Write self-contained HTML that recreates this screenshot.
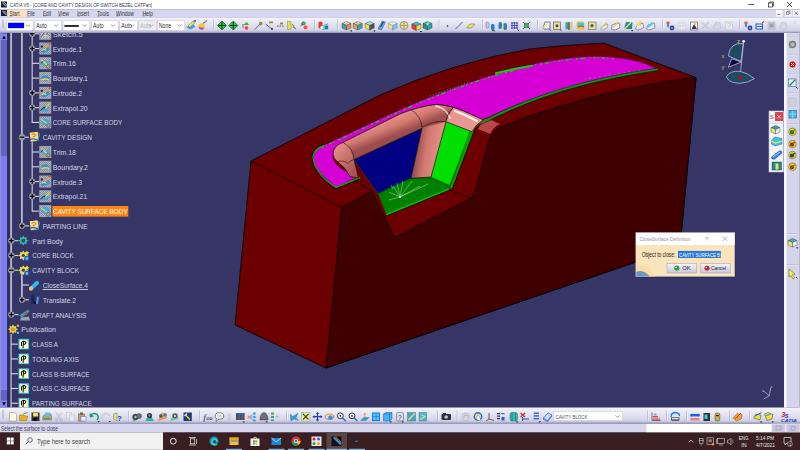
<!DOCTYPE html><html><head><meta charset="utf-8"><style>html,body{margin:0;padding:0;width:800px;height:450px;overflow:hidden;background:#353566}</style></head><body><svg width="800" height="450" viewBox="0 0 800 450" style="position:absolute;left:0;top:0" font-family="Liberation Sans"><defs><linearGradient id="tb" x1="0" y1="0" x2="0" y2="1"><stop offset="0" stop-color="#f4f4fc"/><stop offset="0.2" stop-color="#ececf8"/><stop offset="0.8" stop-color="#d4d4ea"/><stop offset="0.9" stop-color="#c0c0d8"/><stop offset="1" stop-color="#9090a8"/></linearGradient><linearGradient id="tube" x1="0" y1="0" x2="0" y2="1"><stop offset="0" stop-color="#f0a098"/><stop offset="0.5" stop-color="#e08880"/><stop offset="1" stop-color="#b06060"/></linearGradient><linearGradient id="btn" x1="0" y1="0" x2="0" y2="1"><stop offset="0" stop-color="#f4f4fc"/><stop offset="1" stop-color="#c8c8dc"/></linearGradient><radialGradient id="glb" cx="0.7" cy="0.3" r="0.8"><stop offset="0" stop-color="#ffd080"/><stop offset="0.5" stop-color="#f0c080"/><stop offset="1" stop-color="#6090b0"/></radialGradient><pattern id="chk" width="2" height="2" patternUnits="userSpaceOnUse"><rect width="2" height="2" fill="#b4b4bc"/><rect width="1" height="1" fill="#8c8c98"/><rect x="1" y="1" width="1" height="1" fill="#8c8c98"/></pattern><clipPath id="vpclip"><rect x="0" y="33" width="784" height="374.5"/></clipPath></defs><rect x="0" y="0" width="800" height="9.2" fill="#ffffff"/><rect x="1" y="1.5" width="6" height="6" fill="#1a1a2a"/><path d="M2,3 L6,7 L7,6 L3,2 Z" fill="#4aa0e0"/><path d="M4,2 L7,5" stroke="#f0a030" stroke-width="1"/><text x="10" y="7.0" font-size="6.0" fill="#383848" text-anchor="start" textLength="142" lengthAdjust="spacingAndGlyphs" >CATIA V5 - [CORE AND CAVITY DESIGN OF SWITCH BEZEL.CATPart]</text><path d="M748.5,4.5 H754" stroke="#000" stroke-width="0.7"/><rect x="768.5" y="3" width="4" height="4" fill="none" stroke="#000" stroke-width="0.6"/><path d="M769.5,3 V2 H773.5 V6 H772.5" fill="none" stroke="#000" stroke-width="0.6"/><path d="M787,2 L792,7 M792,2 L787,7" stroke="#000" stroke-width="0.7"/><rect x="0" y="9.2" width="800" height="8.3" fill="#d6d6ee"/><rect x="8.4" y="9.6" width="18" height="7.5" fill="#fde2c0"/><rect x="1" y="10" width="6" height="6" fill="#1a1a2a"/><path d="M2,11.5 L6,15.5 L7,14.5 L3,10.5 Z" fill="#4aa0e0"/><path d="M4,10.5 L7,13.5" stroke="#f0a030" stroke-width="1"/><text x="9.5" y="15.9" font-size="6.7" fill="#303040" text-anchor="start" textLength="10" lengthAdjust="spacingAndGlyphs" >Start</text><rect x="9.5" y="15.8" width="3" height="0.4" fill="#404050"/><text x="27.3" y="15.9" font-size="6.7" fill="#303040" text-anchor="start" textLength="7.6" lengthAdjust="spacingAndGlyphs" >File</text><rect x="27.3" y="15.8" width="3" height="0.4" fill="#404050"/><text x="43" y="15.9" font-size="6.7" fill="#303040" text-anchor="start" textLength="8" lengthAdjust="spacingAndGlyphs" >Edit</text><rect x="43" y="15.8" width="3" height="0.4" fill="#404050"/><text x="58" y="15.9" font-size="6.7" fill="#303040" text-anchor="start" textLength="11" lengthAdjust="spacingAndGlyphs" >View</text><rect x="58" y="15.8" width="3" height="0.4" fill="#404050"/><text x="77" y="15.9" font-size="6.7" fill="#303040" text-anchor="start" textLength="12" lengthAdjust="spacingAndGlyphs" >Insert</text><rect x="77" y="15.8" width="3" height="0.4" fill="#404050"/><text x="97" y="15.9" font-size="6.7" fill="#303040" text-anchor="start" textLength="12" lengthAdjust="spacingAndGlyphs" >Tools</text><rect x="97" y="15.8" width="3" height="0.4" fill="#404050"/><text x="116" y="15.9" font-size="6.7" fill="#303040" text-anchor="start" textLength="18" lengthAdjust="spacingAndGlyphs" >Window</text><rect x="116" y="15.8" width="3" height="0.4" fill="#404050"/><text x="142.4" y="15.9" font-size="6.7" fill="#303040" text-anchor="start" textLength="10.6" lengthAdjust="spacingAndGlyphs" >Help</text><rect x="142.4" y="15.8" width="3" height="0.4" fill="#404050"/><rect x="776" y="10" width="6.5" height="6.5" fill="#fafafe"/><rect x="785" y="10" width="6.5" height="6.5" fill="#fafafe"/><rect x="793" y="10" width="6.5" height="6.5" fill="#fafafe"/><path d="M777.5,14.5 H780" stroke="#303040" stroke-width="0.6"/><rect x="786.5" y="12" width="2.5" height="2.5" fill="none" stroke="#303040" stroke-width="0.5"/><path d="M787.5,12 V11 H790 V13.5 H789" fill="none" stroke="#303040" stroke-width="0.5"/><path d="M794.5,11.5 L798,15 M798,11.5 L794.5,15" stroke="#303040" stroke-width="0.6"/><rect x="0" y="17.3" width="800" height="15.7" fill="url(#tb)"/><rect x="2.5" y="19.5" width="1" height="9" fill="#a8a8c0"/><rect x="6.5" y="20.8" width="26.6" height="9.5" fill="#ffffff" stroke="#c4c4d8" stroke-width="0.5"/><path d="M26.1,24.75 L28.1,26.45 L30.1,24.75" fill="none" stroke="#606070" stroke-width="0.6"/><rect x="8.1" y="22.75" width="16" height="5.4" fill="#0000ff"/><rect x="34.75" y="20.8" width="26.5" height="9.5" fill="#ffffff" stroke="#c4c4d8" stroke-width="0.5"/><path d="M54.25,24.75 L56.25,26.45 L58.25,24.75" fill="none" stroke="#606070" stroke-width="0.6"/><text x="36.25" y="27.9" font-size="6.3" fill="#303030" text-anchor="start" textLength="10.6" lengthAdjust="spacingAndGlyphs" >Auto</text><rect x="63.1" y="20.8" width="26.65" height="9.5" fill="#ffffff" stroke="#c4c4d8" stroke-width="0.5"/><path d="M82.75,24.75 L84.75,26.45 L86.75,24.75" fill="none" stroke="#606070" stroke-width="0.6"/><rect x="64.4" y="25.2" width="14.4" height="1.6" fill="#000"/><rect x="91.6" y="20.8" width="26.5" height="9.5" fill="#ffffff" stroke="#c4c4d8" stroke-width="0.5"/><path d="M111.1,24.75 L113.1,26.45 L115.1,24.75" fill="none" stroke="#606070" stroke-width="0.6"/><text x="93.1" y="27.9" font-size="6.3" fill="#303030" text-anchor="start" textLength="10.6" lengthAdjust="spacingAndGlyphs" >Auto</text><rect x="119.75" y="20.8" width="17.5" height="9.5" fill="#ffffff" stroke="#c4c4d8" stroke-width="0.5"/><path d="M130.25,24.75 L132.25,26.45 L134.25,24.75" fill="none" stroke="#606070" stroke-width="0.6"/><text x="121.25" y="27.9" font-size="6.3" fill="#303030" text-anchor="start" textLength="10.6" lengthAdjust="spacingAndGlyphs" >Auto</text><rect x="138.75" y="20.8" width="17.5" height="9.5" fill="#ececf2" stroke="#c4c4d8" stroke-width="0.5"/><path d="M149.25,24.75 L151.25,26.45 L153.25,24.75" fill="none" stroke="#606070" stroke-width="0.6"/><text x="140.25" y="27.9" font-size="6.3" fill="#b0b0b8" text-anchor="start" textLength="10.6" lengthAdjust="spacingAndGlyphs" >Auto</text><rect x="157.5" y="20.8" width="26.900000000000006" height="9.5" fill="#ffffff" stroke="#c4c4d8" stroke-width="0.5"/><path d="M177.4,24.75 L179.4,26.45 L181.4,24.75" fill="none" stroke="#606070" stroke-width="0.6"/><text x="159.0" y="27.9" font-size="6.3" fill="#303030" text-anchor="start" textLength="12" lengthAdjust="spacingAndGlyphs" >None</text><path d="M186,27 L190,29.5 L195.5,27 L193,24 Z" fill="#40a0e0"/><path d="M188,26 L193,21 L195,22.5 L190,27.5 Z" fill="#f0e060" stroke="#404040" stroke-width="0.4"/><path d="M193,21 L195.5,19.8 L196,22 Z" fill="#2040c0"/><circle cx="201.5" cy="26.5" r="3.2" fill="#f0d020" stroke="none" stroke-width="0.5"/><path d="M198.5,27 A3.2,3.2 0 0 0 204.5,28" fill="#c040e0"/><path d="M203,23.5 L207,20.5" stroke="#4080e0" stroke-width="1.2"/><path d="M205,21.5 L207,20" stroke="#f09040" stroke-width="1"/><rect x="213" y="19.5" width="0.8" height="10.5" fill="#a8a8c0"/><rect x="213.8" y="19.5" width="0.6" height="10.5" fill="#ffffff"/><path d="M222.0,21 L226.5,25.5 L222.0,30 L217.5,25.5 Z" fill="#20d040" stroke="#103010" stroke-width="0.6"/><path d="M222.0,22 V29 M218.5,25.5 H225.5" stroke="#000" stroke-width="0.7"/><path d="M233.25,21 L237.75,25.5 L233.25,30 L228.75,25.5 Z" fill="#20d040" stroke="#103010" stroke-width="0.6"/><path d="M233.25,22 V29 M229.75,25.5 H236.75" stroke="#000" stroke-width="0.7"/><path d="M243,25 L247,22 L249,25 Z" fill="#20c040"/><circle cx="246.5" cy="28" r="2.2" fill="#ff4040" stroke="#fff" stroke-width="0.5"/><path d="M243,24 V28" stroke="#303030" stroke-width="0.6"/><path d="M254.75,29.5 L261.75,22.5" stroke="#404040" stroke-width="0.8"/><circle cx="260.75" cy="23.5" r="1.4" fill="#a0a020" stroke="#303030" stroke-width="0.3"/><path d="M265.5,24 L272,29" stroke="#303040" stroke-width="0.8"/><rect x="269" y="21.5" width="4" height="1.8" fill="#a09020"/><circle cx="272" cy="29" r="1" fill="#303040"/><path d="M277,26 H284.4" stroke="#303040" stroke-width="0.8" stroke-dasharray="1.5 1"/><rect x="280" y="22.5" width="3" height="2" fill="#a09020"/><rect x="287.5" y="21.5" width="3.5" height="8" fill="#e8e040" stroke="#808020" stroke-width="0.4"/><path d="M292,24 L295,28 M293,27 L296,29" stroke="#505060" stroke-width="0.7"/><circle cx="303.5" cy="23.5" r="1.8" fill="#20d040" stroke="#202020" stroke-width="0.4"/><circle cx="305.5" cy="27.5" r="2.4" fill="#ff5050" stroke="#fff" stroke-width="0.5"/><path d="M300.5,26 L303,24" stroke="#303030" stroke-width="0.7"/><rect x="314.4" y="19.5" width="0.8" height="10.5" fill="#a8a8c0"/><rect x="315.2" y="19.5" width="0.6" height="10.5" fill="#ffffff"/><rect x="318.5" y="21.5" width="4" height="7" rx="1.5" fill="#e04020"/><path d="M320,27 L328,23 L328.5,29.5 L322,30 Z" fill="#60c0d0"/><circle cx="322" cy="27.5" r="1.6" fill="#f0f0f0"/><rect x="325" y="26" width="3" height="3" fill="#208080"/><rect x="337.5" y="19.5" width="0.8" height="10.5" fill="#a8a8c0"/><rect x="338.3" y="19.5" width="0.6" height="10.5" fill="#ffffff"/><path d="M346.5,21.5 L351,23.5 L346.5,25.5 L342,23.5 Z" fill="#f0d080" stroke="#303040" stroke-width="0.4"/><path d="M342,23.5 L346.5,25.5 L346.5,30 L342,28 Z" fill="#30a8c0" stroke="#303040" stroke-width="0.4"/><path d="M351,23.5 L346.5,25.5 L346.5,30 L351,28 Z" fill="#e09060" stroke="#303040" stroke-width="0.4"/><path d="M350,30.5 h2.4 l-1.2,1.2 Z" fill="#000"/><path d="M357.7,21.5 L362.2,23.5 L357.7,25.5 L353.2,23.5 Z" fill="#f0c080" stroke="#303040" stroke-width="0.4"/><path d="M353.2,23.5 L357.7,25.5 L357.7,30 L353.2,28 Z" fill="#e0a060" stroke="#303040" stroke-width="0.4"/><path d="M362.2,23.5 L357.7,25.5 L357.7,30 L362.2,28 Z" fill="#30a8c0" stroke="#303040" stroke-width="0.4"/><path d="M369.7,21.5 L374.2,23.5 L369.7,25.5 L365.2,23.5 Z" fill="#a0e0f0" stroke="#303040" stroke-width="0.4"/><path d="M365.2,23.5 L369.7,25.5 L369.7,30 L365.2,28 Z" fill="#f0f020" stroke="#303040" stroke-width="0.4"/><path d="M374.2,23.5 L369.7,25.5 L369.7,30 L374.2,28 Z" fill="#505060" stroke="#303040" stroke-width="0.4"/><path d="M373.2,30.5 h2.4 l-1.2,1.2 Z" fill="#000"/><path d="M378,29 L382,21 L385.5,22 L381.5,30 Z" fill="#50b0d0" stroke="#303060" stroke-width="0.4"/><path d="M380.5,27 L383.5,22" stroke="#202080" stroke-width="1"/><path d="M392.7,21.5 L397.2,23.5 L392.7,25.5 L388.2,23.5 Z" fill="#e8f0f8" stroke="#6080a0" stroke-width="0.4"/><path d="M388.2,23.5 L392.7,25.5 L392.7,30 L388.2,28 Z" fill="#f0e080" stroke="#6080a0" stroke-width="0.4"/><path d="M397.2,23.5 L392.7,25.5 L392.7,30 L397.2,28 Z" fill="#80c0e0" stroke="#6080a0" stroke-width="0.4"/><circle cx="404" cy="25.5" r="4" fill="#e8d890" stroke="#707060" stroke-width="0.6"/><path d="M404,21.5 V29.5 M400,25.5 H408" stroke="#808060" stroke-width="0.6"/><path d="M416.3,22.0 L420.8,24.0 L416.3,26.0 L411.8,24.0 Z" fill="#30c0c0" stroke="#303040" stroke-width="0.4"/><path d="M411.8,24.0 L416.3,26.0 L416.3,30.5 L411.8,28.5 Z" fill="#f04020" stroke="#303040" stroke-width="0.4"/><path d="M420.8,24.0 L416.3,26.0 L416.3,30.5 L420.8,28.5 Z" fill="#f0e040" stroke="#303040" stroke-width="0.4"/><path d="M419.8,31.0 h2.4 l-1.2,1.2 Z" fill="#000"/><path d="M427.5,21.5 L432,23.5 L427.5,25.5 L423,23.5 Z" fill="#30c8c8" stroke="#303040" stroke-width="0.4"/><path d="M423,23.5 L427.5,25.5 L427.5,30 L423,28 Z" fill="#209090" stroke="#303040" stroke-width="0.4"/><path d="M432,23.5 L427.5,25.5 L427.5,30 L432,28 Z" fill="#20b0b0" stroke="#303040" stroke-width="0.4"/><path d="M426,24 L429,22.5 L428,26 Z" fill="#f0e060"/><rect x="438.75" y="19.5" width="0.8" height="10.5" fill="#a8a8c0"/><rect x="439.55" y="19.5" width="0.6" height="10.5" fill="#ffffff"/><circle cx="447.5" cy="26" r="0.8" fill="#202060" stroke="none" stroke-width="0.5"/><path d="M455.5,29.0 L462.5,22.0" stroke="#3060c0" stroke-width="1"/><path d="M466.5,28 L470,24 L475,24 L471.5,28 Z" fill="#f0e060" stroke="#404040" stroke-width="0.4"/><rect x="482" y="19.5" width="0.8" height="10.5" fill="#a8a8c0"/><rect x="482.8" y="19.5" width="0.6" height="10.5" fill="#ffffff"/><rect x="486" y="22" width="3" height="6" rx="1.4" fill="#c8c8e8" stroke="#505080" stroke-width="0.4"/><rect x="491" y="24" width="3.5" height="6" rx="1.5" fill="#2080c0"/><path d="M492,30.5 L495,31" stroke="#000" stroke-width="0.7"/><rect x="498.5" y="22" width="3.5" height="7" rx="1.5" fill="#3080c0"/><path d="M502,29 L504,22" stroke="#f0e040" stroke-width="1.2"/><rect x="503.5" y="23" width="3.5" height="7" rx="1.5" fill="#3080c0"/><g stroke="#2020c0" stroke-width="0.7"><path d="M511,23 H518 M511,25.5 H518 M511,28 H518 M512,22 V29 M514.5,22 V29 M517,22 V29"/></g><path d="M517.5,29.5 L519,31" stroke="#000" stroke-width="0.7"/><circle cx="526.5" cy="25.5" r="2.2" fill="#30c060" stroke="#303030" stroke-width="0.5"/><path d="M523,22 L525,24 M530,22 L528,24 M523,29 L525,27 M530,29 L528,27" stroke="#404040" stroke-width="0.7"/><rect x="537" y="19.5" width="0.8" height="10.5" fill="#a8a8c0"/><rect x="537.8" y="19.5" width="0.6" height="10.5" fill="#ffffff"/><path d="M543,28 L545,22 L550,22 L550,29 L544,29 Z" fill="#f0f0f8" stroke="#303060" stroke-width="0.6"/><path d="M543,28 L547,24" stroke="#f0e040" stroke-width="1.4"/><path d="M549.5,29.5 l1.5,1" stroke="#000" stroke-width="0.7"/><rect x="553.5" y="22" width="7" height="7.5" fill="#f0e080" stroke="#505060" stroke-width="0.6"/><circle cx="557" cy="25.8" r="1.5" fill="#3050a0"/><path d="M560,29.5 l1.5,1" stroke="#000" stroke-width="0.7"/><path d="M565.5,22 L568.5,22.5 L568.5,29 L565.5,29.5 Z" fill="#30a0b0"/><path d="M569.5,22.5 L572.5,22 L572.5,29.5 L569.5,29 Z" fill="#e0d060"/><rect x="568.5" y="22" width="1" height="8" fill="#202030"/><rect x="576.5" y="21.5" width="8" height="8" rx="1.5" fill="#f0c040"/><path d="M577.5,23.5 Q581,21.5 584,23.5 L584,27 Q580,25 578,28 Z" fill="#30c8e0"/><path d="M578,27 Q581,25 584,27" stroke="#e04020" stroke-width="1" fill="none"/><rect x="588.5" y="22" width="7.5" height="7.5" fill="#f0e080" stroke="#606060" stroke-width="0.6"/><circle cx="592" cy="25.7" r="1.6" fill="#3060a0"/><path d="M600.5,29 L603,26 L608,24 L607,28 L602,30 Z" fill="#e8e8f0" stroke="#606060" stroke-width="0.4"/><path d="M602,27 L607,22.5" stroke="#e0d040" stroke-width="1.5"/><path d="M611.5,29.5 L612,25 L617,23 L620,24 L619.5,28 L615,30 Z" fill="#f0f0f8" stroke="#303060" stroke-width="0.5"/><path d="M613,27 L619,22" stroke="#e0d040" stroke-width="1.4"/><path d="M624,29 L626,22 L632.5,22.5 L632,29 Z" fill="#208890"/><path d="M624.5,29 L631,22.5" stroke="#f0e060" stroke-width="1.4"/><path d="M631,30 h2.4 l-1.2,1.2 Z" fill="#000"/><path d="M635.5,29 L637,25 L643,23 L643.5,28 L638,30 Z" fill="#e8e8f0" stroke="#505060" stroke-width="0.5"/><path d="M637,26 L641,21.5" stroke="#f0e040" stroke-width="2"/><path d="M646.5,29 L648,25 L654.5,23 L655,28 L649,30 Z" fill="#e8e8f0" stroke="#505060" stroke-width="0.5"/><path d="M648,27 L653,22.5" stroke="#40d0f0" stroke-width="2"/><rect x="662" y="19.5" width="0.8" height="10.5" fill="#a8a8c0"/><rect x="662.8" y="19.5" width="0.6" height="10.5" fill="#ffffff"/><circle cx="668" cy="23" r="1.8" fill="#e06060" stroke="none" stroke-width="0.5"/><rect x="667" y="24" width="2" height="3" fill="#30a0a0"/><circle cx="672" cy="28" r="2.4" fill="#2040c0" stroke="none" stroke-width="0.5"/><circle cx="672" cy="28" r="1" fill="#f0a020" stroke="none" stroke-width="0.5"/><rect x="678" y="23" width="7.5" height="6.5" fill="#e8e8ec" stroke="#c8c8d0" stroke-width="0.5"/><rect x="679" y="25" width="2" height="2" fill="#d0d0d8"/><rect x="682" y="25" width="2" height="2" fill="#d0d0d8"/><rect x="690.5" y="22" width="7" height="8" fill="#f8f8ff" stroke="#303030" stroke-width="0.5"/><path d="M691.5,29 L694,24 L697,29 Z" fill="#303060"/><circle cx="695" cy="24" r="1.4" fill="#f0c040"/><path d="M701.5,22 L709,29 M709,22 L701.5,29" stroke="#c8c8d0" stroke-width="1.6"/><path d="M713,28 L716,22 L720,23 L721,28 L717,30 Z" fill="#d8d8e0" stroke="#b8b8c8" stroke-width="0.6"/><rect x="725.5" y="22" width="7" height="7.5" fill="#ececf0" stroke="#c0c0c8" stroke-width="0.6"/><path d="M727,24 Q729,22.5 731,24 Q731,26 729,26 L729,28" fill="none" stroke="#b8b8c0" stroke-width="0.7"/><rect x="739" y="19.5" width="0.8" height="10.5" fill="#a8a8c0"/><rect x="739.8" y="19.5" width="0.6" height="10.5" fill="#ffffff"/><circle cx="746" cy="23" r="1.8" fill="#e06060" stroke="none" stroke-width="0.5"/><rect x="745" y="24" width="2" height="3" fill="#30a0a0"/><circle cx="750" cy="28" r="2.4" fill="#2040c0" stroke="none" stroke-width="0.5"/><circle cx="750" cy="28" r="1" fill="#f0a020" stroke="none" stroke-width="0.5"/><rect x="755.5" y="23.5" width="7.5" height="6" fill="#2060c0"/><rect x="756.5" y="24.5" width="5.5" height="4" fill="#e0f0ff"/><rect x="756.5" y="26" width="5.5" height="1" fill="#2060c0"/><path d="M762,23 L764,21.5" stroke="#c02020" stroke-width="1"/><rect x="768" y="22" width="7" height="7.5" fill="#c8c8d0" stroke="#b0b0b8" stroke-width="0.5"/><rect x="769.5" y="23.5" width="4" height="4" fill="#a0a0a8"/><path d="M779.5,28 L782,22 L786,23 L787,28 L783,30 Z" fill="#d8d8e0" stroke="#b8b8c8" stroke-width="0.6"/><path d="M794,21 L796,22.5 L794,24" fill="none" stroke="#c0c0d0" stroke-width="0.6"/><rect x="0" y="33" width="784" height="374.5" fill="#353566"/><path d="M251,161 L380,95 Q455,62 530,49 Q570,44.5 604,43.2 L696,77.6 L680,247 L326,368 L235,325 Z" fill="#6c0000" stroke="#000" stroke-width="0.8" stroke-linejoin="round"/><path d="M341.7,207.3 L371.7,191.1 L394.6,237.5 L472,198 L476,188 L489,140 Q492,131 501,127 C560,103 640,83 696,77.6 L680,247 L326,368 Z" fill="#3e0000" stroke="#000" stroke-width="0.8" stroke-linejoin="round"/><path d="M251,161 L341.7,207.3" fill="none" stroke="#000" stroke-width="0.8" stroke-linejoin="round"/><path d="M354,180 L371.7,191.1" fill="none" stroke="#000" stroke-width="0.8" stroke-linejoin="round"/><path d="M447,189 L472,198" fill="none" stroke="#000" stroke-width="0.8" stroke-linejoin="round"/><path d="M487,123 Q500,127 501,127" fill="none" stroke="#000" stroke-width="0.6"/><path d="M478,129 Q481,121 489,119 L500,124 Q493,127 490,134 Q486,132 478,129 Z" fill="#b84848"/><path d="M314,152 Q316,147 322,146 L380,119 C420,100 465,82 520,67 C555,59 590,54 614,57.4 C635,59 648,64 658,69.3 C620,75 555,86 483,120 L470,114 Q455,106 437,104.4 Q420,106 400,114 L343,143 Q335,146 333,154 Q332,160 338,166 Q345,172 357,177 L336,188 Q318,172 313,164 Z" fill="#d400d4" stroke="#200020" stroke-width="0.4"/><path d="M322,147.5 L380,120.5 C420,101.5 465,83.5 520,68.5 C555,60.5 590,55.5 614,58.9" fill="none" stroke="#10d010" stroke-width="1.4" stroke-dasharray="2 2 1 3 3 2 1 4 2 3 4 5 1 3"/><path d="M495,73.5 Q512,69 531,66" fill="none" stroke="#10d010" stroke-width="2"/><path d="M585,79 Q610,75 640,70" fill="none" stroke="#40e040" stroke-width="0.8" stroke-dasharray="1 3 2 4" opacity="0.8"/><path d="M430,96 L470,82" fill="none" stroke="#10d010" stroke-width="1" stroke-dasharray="1 2"/><path d="M324,145.5 Q314,149 313,157 Q315,174 336,187.5 L360,177.5" fill="none" stroke="#00b000" stroke-width="1.4"/><path d="M324,144 Q312.5,148 311.7,157 Q313.5,176 336,189 L360,179" fill="none" stroke="#000" stroke-width="0.5"/><path d="M354,159.4 L422,128.3 L446,121.7 L474,130 L451,188 L386.6,215.3 L378.6,194.9 Z" fill="#008000"/><path d="M354,159.4 L422,128.3 L411,178.3 L378,193.5 Z" fill="#000080"/><path d="M446,121.7 L472,131.7 L450,185 L431,177 Z" fill="#00e000"/><path d="M472,131.7 L450,185" fill="none" stroke="#003000" stroke-width="0.6"/><path d="M378.6,194.9 Q395,182 411,178.3 L431,178 Q443,182 449,188" fill="none" stroke="#004000" stroke-width="0.6"/><path d="M386.6,214.5 L449,189" fill="none" stroke="#00c000" stroke-width="1.6"/><path d="M386.6,216 L449,190.5" fill="none" stroke="#000" stroke-width="0.5"/><path d="M658,69.3 C620,75 555,86 489,119 Q478,122 473.3,128.3 L451,188" fill="none" stroke="#00a000" stroke-width="2.2"/><path d="M658,70.6 C620,76.3 555,87.3 489.5,120.5 Q479.5,124 474.8,130 L452.5,189" fill="none" stroke="#000" stroke-width="0.5"/><path d="M658,68 C620,73.7 555,84.7 488.5,117.5 Q476.5,120 471.8,126.6 L449.5,187" fill="none" stroke="#000" stroke-width="0.4"/><defs><linearGradient id="gTop" gradientUnits="userSpaceOnUse" x1="391" y1="114" x2="399" y2="134"><stop offset="0" stop-color="#ec9890"/><stop offset="0.55" stop-color="#d47c74"/><stop offset="1" stop-color="#9c4c4c"/></linearGradient><linearGradient id="gRight" gradientUnits="userSpaceOnUse" x1="414" y1="150" x2="440" y2="154"><stop offset="0" stop-color="#8c4444"/><stop offset="0.45" stop-color="#d07870"/><stop offset="1" stop-color="#e89088"/></linearGradient><linearGradient id="gCap" gradientUnits="userSpaceOnUse" x1="336" y1="150" x2="356" y2="170"><stop offset="0" stop-color="#e08a80"/><stop offset="1" stop-color="#a85454"/></linearGradient></defs><path d="M333,154 Q333,146 343,142.4 L400,114 Q420,106 437,104.4 Q455,106 470,113.9 L483.3,120 Q476,124 472,131.7 L446,121.7 L431,177 L411,178.3 L422,128.3 L354,159.4 L358.5,178 L350,176.5 Q346,168 339,163 Q333,159 333,154 Z" fill="url(#gCap)"/><path d="M343,142.4 L400,114 Q420,106 437,104.4 L453.3,107.8 L446,121.7 L422,128.3 L354,159.4 Q352,148 343,142.4 Z" fill="url(#gTop)"/><path d="M422,128.3 L446,121.7 L431,177 L411,178.3 Z" fill="url(#gRight)"/><path d="M453.3,107.8 L470,113.9 L483.3,120 Q476,124 472,131.7 L446,121.7 Z" fill="#e89890"/><path d="M436,106 Q446,108 450,118" fill="none" stroke="#ffffff" stroke-width="1.6" stroke-linecap="round" opacity="0.7"/><path d="M455,111 Q466,115 477,121" fill="none" stroke="#fff0f0" stroke-width="2.2" stroke-linecap="round"/><path d="M333,154 Q333,146 343,142.4 L400,114 Q420,106 437,104.4 Q455,106 470,113.9 L483.3,120 Q476,124 472,131.7 L446,121.7 L431,177 L411,178.3 L422,128.3 L354,159.4 L358.5,178 L350,176.5 Q346,168 339,163 Q333,159 333,154 Z" fill="none" stroke="#000" stroke-width="0.6"/><path d="M343,142.4 Q353,148 354,159.4 M411,109.5 Q421,116 422,127.5 M453.3,107.8 Q447,113 446,121.7 M422,127.2 Q434,120 446,121.7 M337.5,161.5 Q344,160 348,163.5 Q351,160 354,159.4" fill="none" stroke="#000" stroke-width="0.5"/><g stroke="#d8f8d8" stroke-width="0.4" fill="none"><path d="M400,197 L403,181 M400,197 L393,186 M400,197 L389,192 M400,197 L389,200 M400,197 L397,183 M393,189 L391,185 M400,197 L420,186 M400,197 L428,184 M400,197 L412,181"/></g><rect x="399.3" y="196.3" width="1.6" height="1.6" fill="#fff"/><g clip-path="url(#vpclip)"><rect x="0" y="33" width="7.2" height="374.5" fill="#6262c8"/><rect x="0" y="156" width="7.2" height="234" fill="#7c7cf4"/><rect x="7.2" y="33" width="2.4" height="374.5" fill="#2c2c58"/><rect x="0" y="33" width="0.8" height="374.5" fill="#9898b0"/><rect x="1" y="34" width="6" height="6" fill="#8484ff"/><path d="M2.2,39 L4,35.6 L5.8,39 Z" fill="#000"/><rect x="1" y="400.5" width="6" height="6.5" fill="#8484ff"/><path d="M2.2,402.3 L4,405.8 L5.8,402.3 Z" fill="#000"/><rect x="10.2" y="33" width="1.8" height="281" fill="#b8b8cc"/><rect x="21" y="33" width="1.8" height="193" fill="#b8b8cc"/><rect x="21" y="270" width="1.8" height="30" fill="#b8b8cc"/><rect x="31.6" y="33" width="1.1" height="90" fill="#d4d4e4"/><rect x="31.6" y="142" width="1.1" height="69.5" fill="#d4d4e4"/><rect x="10.5" y="334" width="1.1" height="74" fill="#d4d4e4"/><rect x="32" y="33.22" width="7" height="1.1" fill="#d4d4e4"/><rect x="39.3" y="27.72" width="12" height="12" fill="#a4a4b4"/><rect x="39.8" y="28.22" width="11" height="11" fill="url(#chk)"/><path d="M41.3,29.72 H49.3 M41.3,32.72 H49.3 M41.3,35.72 H49.3 M42.3,28.72 V38.72 M45.3,28.72 V38.72 M48.3,28.72 V38.72" stroke="#e8e8f0" stroke-width="0.6"/><path d="M41.3,36.72 L45.3,31.72 L49.3,35.72" fill="none" stroke="#303040" stroke-width="0.8"/><circle cx="32.2" cy="33.72" r="3.1" fill="#9c9ca4"/><rect x="29.900000000000002" y="33.12" width="4.6" height="1.2" fill="#000"/><rect x="31.6" y="31.419999999999998" width="1.2" height="4.6" fill="#000"/><text x="52.7" y="36.72" font-size="7.9" fill="#d4d4e2" textLength="30" lengthAdjust="spacingAndGlyphs" >Sketch.5</text><rect x="32" y="48.0" width="7" height="1.1" fill="#d4d4e4"/><rect x="39.3" y="42.5" width="12" height="12" fill="#a4a4b4"/><rect x="39.8" y="43.0" width="11" height="11" fill="url(#chk)"/><path d="M40.8,51.5 Q42.3,47.5 45.3,49.5 L48.3,46.5 L49.8,49.5 Q47.3,53.0 42.3,53.0 Z" fill="#3090e0"/><path d="M41.8,50.5 Q44.3,48.5 46.3,50.5" fill="none" stroke="#f0d840" stroke-width="1.1"/><path d="M46.3,47.5 L49.8,44.0" stroke="#f0a020" stroke-width="1.3"/><path d="M48.8,44.0 L50.3,43.5" stroke="#e02020" stroke-width="1.2"/><rect x="40.8" y="45.5" width="2" height="2" fill="#202020"/><circle cx="32.2" cy="48.5" r="3.1" fill="#9c9ca4"/><rect x="29.900000000000002" y="47.9" width="4.6" height="1.2" fill="#000"/><rect x="31.6" y="46.2" width="1.2" height="4.6" fill="#000"/><text x="52.7" y="51.5" font-size="7.9" fill="#d4d4e2" textLength="29.3" lengthAdjust="spacingAndGlyphs" >Extrude.1</text><rect x="32" y="62.78" width="7" height="1.1" fill="#d4d4e4"/><rect x="39.3" y="57.28" width="12" height="12" fill="#a4a4b4"/><rect x="39.8" y="57.78" width="11" height="11" fill="url(#chk)"/><path d="M40.3,60.28 L45.3,62.28 L50.3,59.28 L48.3,64.28 L45.3,66.28 L40.8,64.28 Z" fill="#40a8e8"/><path d="M41.3,59.78 L47.3,65.28" stroke="#f0d840" stroke-width="1.2"/><path d="M40.8,63.28 L43.3,61.28" stroke="#1030a0" stroke-width="1"/><circle cx="48.3" cy="66.48" r="1.9" fill="none" stroke="#706040" stroke-width="0.9"/><text x="52.7" y="66.28" font-size="7.9" fill="#d4d4e2" textLength="23.3" lengthAdjust="spacingAndGlyphs" >Trim.16</text><rect x="32" y="77.56" width="7" height="1.1" fill="#d4d4e4"/><rect x="39.3" y="72.06" width="12" height="12" fill="#a4a4b4"/><rect x="39.8" y="72.56" width="11" height="11" fill="url(#chk)"/><path d="M40.8,80.56 Q41.3,75.06 45.3,75.56 Q49.8,75.56 49.8,80.56 Z" fill="#3090e0"/><path d="M41.3,80.06 Q45.3,78.06 49.3,80.06" fill="none" stroke="#f0d840" stroke-width="1.4"/><text x="52.7" y="81.06" font-size="7.9" fill="#d4d4e2" textLength="35.3" lengthAdjust="spacingAndGlyphs" >Boundary.1</text><rect x="32" y="92.34" width="7" height="1.1" fill="#d4d4e4"/><rect x="39.3" y="86.84" width="12" height="12" fill="#a4a4b4"/><rect x="39.8" y="87.34" width="11" height="11" fill="url(#chk)"/><path d="M40.8,95.84 Q42.3,91.84 45.3,93.84 L48.3,90.84 L49.8,93.84 Q47.3,97.34 42.3,97.34 Z" fill="#3090e0"/><path d="M41.8,94.84 Q44.3,92.84 46.3,94.84" fill="none" stroke="#f0d840" stroke-width="1.1"/><path d="M46.3,91.84 L49.8,88.34" stroke="#f0a020" stroke-width="1.3"/><path d="M48.8,88.34 L50.3,87.84" stroke="#e02020" stroke-width="1.2"/><rect x="40.8" y="89.84" width="2" height="2" fill="#202020"/><circle cx="32.2" cy="92.84" r="3.1" fill="#9c9ca4"/><rect x="29.900000000000002" y="92.24000000000001" width="4.6" height="1.2" fill="#000"/><rect x="31.6" y="90.54" width="1.2" height="4.6" fill="#000"/><text x="52.7" y="95.84" font-size="7.9" fill="#d4d4e2" textLength="29.3" lengthAdjust="spacingAndGlyphs" >Extrude.2</text><rect x="32" y="107.12" width="7" height="1.1" fill="#d4d4e4"/><rect x="39.3" y="101.62" width="12" height="12" fill="#a4a4b4"/><rect x="39.8" y="102.12" width="11" height="11" fill="url(#chk)"/><path d="M40.3,109.62 L44.3,105.62 L49.3,107.62 L47.3,111.62 L42.3,111.62 Z" fill="#40a0e0"/><path d="M40.3,110.62 Q43.3,106.62 46.3,107.62 L49.3,104.62" fill="none" stroke="#101010" stroke-width="0.9"/><path d="M45.3,108.62 L49.8,103.62" stroke="#f0d840" stroke-width="1.3"/><circle cx="32.2" cy="107.62" r="3.1" fill="#9c9ca4"/><rect x="29.900000000000002" y="107.02000000000001" width="4.6" height="1.2" fill="#000"/><rect x="31.6" y="105.32000000000001" width="1.2" height="4.6" fill="#000"/><text x="52.7" y="110.62" font-size="7.9" fill="#d4d4e2" textLength="35" lengthAdjust="spacingAndGlyphs" >Extrapol.20</text><rect x="32" y="121.89999999999999" width="7" height="1.1" fill="#d4d4e4"/><rect x="39.3" y="116.39999999999999" width="12" height="12" fill="#a4a4b4"/><rect x="39.8" y="116.89999999999999" width="11" height="11" fill="url(#chk)"/><path d="M40.3,120.39999999999999 L44.3,118.39999999999999 L50.3,120.39999999999999 L48.3,124.39999999999999 L43.3,125.39999999999999 Z" fill="#40a8e8"/><path d="M41.3,119.39999999999999 L48.3,124.39999999999999" stroke="#f0d840" stroke-width="1.1"/><circle cx="48.3" cy="125.6" r="1.9" fill="none" stroke="#606060" stroke-width="0.9"/><text x="52.7" y="125.39999999999999" font-size="7.9" fill="#d4d4e2" textLength="69.5" lengthAdjust="spacingAndGlyphs" >CORE SURFACE BODY</text><rect x="32" y="151.45999999999998" width="7" height="1.1" fill="#d4d4e4"/><rect x="39.3" y="145.95999999999998" width="12" height="12" fill="#a4a4b4"/><rect x="39.8" y="146.45999999999998" width="11" height="11" fill="url(#chk)"/><path d="M40.3,148.95999999999998 L45.3,150.95999999999998 L50.3,147.95999999999998 L48.3,152.95999999999998 L45.3,154.95999999999998 L40.8,152.95999999999998 Z" fill="#40a8e8"/><path d="M41.3,148.45999999999998 L47.3,153.95999999999998" stroke="#f0d840" stroke-width="1.2"/><path d="M40.8,151.95999999999998 L43.3,149.95999999999998" stroke="#1030a0" stroke-width="1"/><circle cx="48.3" cy="155.15999999999997" r="1.9" fill="none" stroke="#706040" stroke-width="0.9"/><text x="52.7" y="154.95999999999998" font-size="7.9" fill="#d4d4e2" textLength="23.3" lengthAdjust="spacingAndGlyphs" >Trim.18</text><rect x="32" y="166.24" width="7" height="1.1" fill="#d4d4e4"/><rect x="39.3" y="160.74" width="12" height="12" fill="#a4a4b4"/><rect x="39.8" y="161.24" width="11" height="11" fill="url(#chk)"/><path d="M40.8,169.24 Q41.3,163.74 45.3,164.24 Q49.8,164.24 49.8,169.24 Z" fill="#3090e0"/><path d="M41.3,168.74 Q45.3,166.74 49.3,168.74" fill="none" stroke="#f0d840" stroke-width="1.4"/><text x="52.7" y="169.74" font-size="7.9" fill="#d4d4e2" textLength="35.3" lengthAdjust="spacingAndGlyphs" >Boundary.2</text><rect x="32" y="181.01999999999998" width="7" height="1.1" fill="#d4d4e4"/><rect x="39.3" y="175.51999999999998" width="12" height="12" fill="#a4a4b4"/><rect x="39.8" y="176.01999999999998" width="11" height="11" fill="url(#chk)"/><path d="M40.8,184.51999999999998 Q42.3,180.51999999999998 45.3,182.51999999999998 L48.3,179.51999999999998 L49.8,182.51999999999998 Q47.3,186.01999999999998 42.3,186.01999999999998 Z" fill="#3090e0"/><path d="M41.8,183.51999999999998 Q44.3,181.51999999999998 46.3,183.51999999999998" fill="none" stroke="#f0d840" stroke-width="1.1"/><path d="M46.3,180.51999999999998 L49.8,177.01999999999998" stroke="#f0a020" stroke-width="1.3"/><path d="M48.8,177.01999999999998 L50.3,176.51999999999998" stroke="#e02020" stroke-width="1.2"/><rect x="40.8" y="178.51999999999998" width="2" height="2" fill="#202020"/><circle cx="32.2" cy="181.51999999999998" r="3.1" fill="#9c9ca4"/><rect x="29.900000000000002" y="180.92" width="4.6" height="1.2" fill="#000"/><rect x="31.6" y="179.21999999999997" width="1.2" height="4.6" fill="#000"/><text x="52.7" y="184.51999999999998" font-size="7.9" fill="#d4d4e2" textLength="29.3" lengthAdjust="spacingAndGlyphs" >Extrude.3</text><rect x="32" y="195.79999999999998" width="7" height="1.1" fill="#d4d4e4"/><rect x="39.3" y="190.29999999999998" width="12" height="12" fill="#a4a4b4"/><rect x="39.8" y="190.79999999999998" width="11" height="11" fill="url(#chk)"/><path d="M40.3,198.29999999999998 L44.3,194.29999999999998 L49.3,196.29999999999998 L47.3,200.29999999999998 L42.3,200.29999999999998 Z" fill="#40a0e0"/><path d="M40.3,199.29999999999998 Q43.3,195.29999999999998 46.3,196.29999999999998 L49.3,193.29999999999998" fill="none" stroke="#101010" stroke-width="0.9"/><path d="M45.3,197.29999999999998 L49.8,192.29999999999998" stroke="#f0d840" stroke-width="1.3"/><circle cx="32.2" cy="196.29999999999998" r="3.1" fill="#9c9ca4"/><rect x="29.900000000000002" y="195.7" width="4.6" height="1.2" fill="#000"/><rect x="31.6" y="193.99999999999997" width="1.2" height="4.6" fill="#000"/><text x="52.7" y="199.29999999999998" font-size="7.9" fill="#d4d4e2" textLength="34.5" lengthAdjust="spacingAndGlyphs" >Extrapol.21</text><rect x="32" y="210.57999999999998" width="7" height="1.1" fill="#d4d4e4"/><rect x="39.3" y="205.07999999999998" width="12" height="12" fill="#a4a4b4"/><rect x="39.8" y="205.57999999999998" width="11" height="11" fill="url(#chk)"/><path d="M40.3,209.07999999999998 L44.3,207.07999999999998 L50.3,209.07999999999998 L48.3,213.07999999999998 L43.3,214.07999999999998 Z" fill="#40a8e8"/><path d="M41.3,208.07999999999998 L48.3,213.07999999999998" stroke="#f0d840" stroke-width="1.1"/><circle cx="48.3" cy="214.27999999999997" r="1.9" fill="none" stroke="#606060" stroke-width="0.9"/><rect x="52.4" y="206" width="75.9" height="10.6" fill="#ff8410"/><text x="53" y="214.07999999999998" font-size="7.9" fill="#ffffff" textLength="74.7" lengthAdjust="spacingAndGlyphs" >CAVITY SURFACE BODY</text><circle cx="22" cy="137.18" r="3.1" fill="#9c9ca4"/><rect x="19.7" y="136.58" width="4.6" height="1.2" fill="#000"/><rect x="25" y="136.68" width="4" height="1.1" fill="#d4d4e4"/><path d="M29.7,132.68 L37.7,131.68 L38.7,140.68 L30.7,141.68 Z" fill="#f8e080"/><path d="M31.7,134.68 q2,-2 4,0 q-1,3 -3,2" fill="none" stroke="#e05020" stroke-width="0.9"/><path d="M29.7,139.68 Q33.7,137.68 38.7,140.68" fill="none" stroke="#2070c0" stroke-width="1.4"/><path d="M38.7,132.68 q2,2 -1,6" fill="none" stroke="#40c0e0" stroke-width="0.9"/><text x="42.7" y="140.18" font-size="7.9" fill="#d4d4e2" textLength="49.3" lengthAdjust="spacingAndGlyphs" >CAVITY DESIGN</text><circle cx="22" cy="225.85999999999999" r="3.1" fill="#9c9ca4"/><rect x="19.7" y="225.26" width="4.6" height="1.2" fill="#000"/><rect x="21.4" y="223.55999999999997" width="1.2" height="4.6" fill="#000"/><rect x="25" y="225.35999999999999" width="4" height="1.1" fill="#d4d4e4"/><path d="M29.7,221.35999999999999 L37.7,220.35999999999999 L38.7,229.35999999999999 L30.7,230.35999999999999 Z" fill="#f8e080"/><path d="M31.7,223.35999999999999 q2,-2 4,0 q-1,3 -3,2" fill="none" stroke="#e05020" stroke-width="0.9"/><path d="M29.7,228.35999999999999 Q33.7,226.35999999999999 38.7,229.35999999999999" fill="none" stroke="#2070c0" stroke-width="1.4"/><path d="M38.7,221.35999999999999 q2,2 -1,6" fill="none" stroke="#40c0e0" stroke-width="0.9"/><text x="42.7" y="228.85999999999999" font-size="7.9" fill="#d4d4e2" textLength="45" lengthAdjust="spacingAndGlyphs" >PARTING LINE</text><circle cx="11.3" cy="240.64" r="3.1" fill="#9c9ca4"/><rect x="9.0" y="240.04" width="4.6" height="1.2" fill="#000"/><rect x="10.700000000000001" y="238.33999999999997" width="1.2" height="4.6" fill="#000"/><rect x="14.5" y="240.14" width="4" height="1.1" fill="#d4d4e4"/><polygon points="28.3,240.6 26.3,241.9 26.8,244.2 24.5,243.6 23.3,245.6 22.1,243.6 19.8,244.2 20.3,241.9 18.3,240.6 20.3,239.4 19.8,237.1 22.1,237.7 23.3,235.6 24.5,237.7 26.8,237.1 26.3,239.4" fill="#30c0c0"/><circle cx="23.3" cy="240.64" r="1.6" fill="#404040"/><circle cx="23.3" cy="240.64" r="2" fill="#2a5a40"/><text x="32.3" y="243.64" font-size="7.9" fill="#d4d4e2" textLength="30.7" lengthAdjust="spacingAndGlyphs" >Part Body</text><circle cx="11.3" cy="255.42" r="3.1" fill="#9c9ca4"/><rect x="9.0" y="254.82" width="4.6" height="1.2" fill="#000"/><rect x="10.700000000000001" y="253.11999999999998" width="1.2" height="4.6" fill="#000"/><rect x="14.5" y="254.92" width="4" height="1.1" fill="#d4d4e4"/><polygon points="28.3,255.4 26.3,256.6 26.8,259.0 24.5,258.4 23.3,260.4 22.1,258.4 19.8,259.0 20.3,256.6 18.3,255.4 20.3,254.2 19.8,251.9 22.1,252.5 23.3,250.4 24.5,252.5 26.8,251.9 26.3,254.2" fill="#e8e060"/><circle cx="23.3" cy="255.42" r="1.6" fill="#404040"/><circle cx="26.8" cy="258.41999999999996" r="2.6" fill="#2060d0"/><circle cx="26.8" cy="258.41999999999996" r="1.2" fill="#80c0ff"/><path d="M27,250.42 l0.8,1.6 1.6,0.3 -1.2,1 0.3,1.6 -1.5,-0.8 -1.5,0.8 0.3,-1.6 -1.2,-1 1.6,-0.3 Z" fill="#f0e020"/><text x="32.3" y="258.41999999999996" font-size="7.9" fill="#d4d4e2" textLength="41.3" lengthAdjust="spacingAndGlyphs" >CORE BLOCK</text><circle cx="11.3" cy="270.2" r="3.1" fill="#9c9ca4"/><rect x="9.0" y="269.59999999999997" width="4.6" height="1.2" fill="#000"/><rect x="14.5" y="269.7" width="4" height="1.1" fill="#d4d4e4"/><polygon points="28.3,270.2 26.3,271.4 26.8,273.7 24.5,273.2 23.3,275.2 22.1,273.2 19.8,273.7 20.3,271.4 18.3,270.2 20.3,269.0 19.8,266.7 22.1,267.2 23.3,265.2 24.5,267.2 26.8,266.7 26.3,269.0" fill="#e8e060"/><circle cx="23.3" cy="270.2" r="1.6" fill="#404040"/><circle cx="26.8" cy="273.2" r="2.6" fill="#2060d0"/><circle cx="26.8" cy="273.2" r="1.2" fill="#80c0ff"/><path d="M27,265.2 l0.8,1.6 1.6,0.3 -1.2,1 0.3,1.6 -1.5,-0.8 -1.5,0.8 0.3,-1.6 -1.2,-1 1.6,-0.3 Z" fill="#f0e020"/><text x="32.3" y="273.2" font-size="7.9" fill="#d4d4e2" textLength="46.7" lengthAdjust="spacingAndGlyphs" >CAVITY BLOCK</text><circle cx="11.3" cy="314.53999999999996" r="3.1" fill="#9c9ca4"/><rect x="9.0" y="313.93999999999994" width="4.6" height="1.2" fill="#000"/><rect x="10.700000000000001" y="312.23999999999995" width="1.2" height="4.6" fill="#000"/><rect x="14.5" y="314.03999999999996" width="4" height="1.1" fill="#d4d4e4"/><path d="M20,320.53999999999996 L30,320.53999999999996 L29,316.53999999999996 L21,317.53999999999996 Z" fill="#a0a0b0"/><path d="M19,315.53999999999996 L28,309.53999999999996 L30,311.53999999999996 L22,317.53999999999996 Z" fill="#30a0c0"/><path d="M24,313.53999999999996 L28,311.53999999999996 L27,315.53999999999996 Z" fill="#e04020"/><text x="32.3" y="317.53999999999996" font-size="7.9" fill="#d4d4e2" textLength="54" lengthAdjust="spacingAndGlyphs" >DRAFT ANALYSIS</text><rect x="22" y="284.48" width="7" height="1.1" fill="#d4d4e4"/><path d="M29,287.98 L36,280.98 Q39,279.98 39,283.98 L32,289.98 Q29,290.98 29,287.98 Z" fill="#30b8f0"/><ellipse cx="31" cy="288.48" rx="2" ry="2.2" fill="#f0c070"/><text x="42.7" y="287.98" font-size="7.9" fill="#d4d4e2" textLength="45.3" lengthAdjust="spacingAndGlyphs" text-decoration="underline">CloseSurface.4</text><rect x="42.7" y="289.28000000000003" width="45.3" height="0.7" fill="#d4d4e2"/><rect x="22" y="299.26" width="7" height="1.1" fill="#d4d4e4"/><circle cx="22" cy="299.76" r="3.1" fill="#9c9ca4"/><rect x="19.7" y="299.15999999999997" width="4.6" height="1.2" fill="#000"/><rect x="21.4" y="297.46" width="1.2" height="4.6" fill="#000"/><path d="M31,294.76 L34,294.76 L35,303.76 L31,303.76 Z" fill="#202060"/><path d="M37,296.76 L39,296.76 L38,303.76 L36,303.76 Z" fill="#40a0f0"/><rect x="34" y="301.76" width="2" height="2" fill="#000"/><text x="42.7" y="302.76" font-size="7.9" fill="#d4d4e2" textLength="33.3" lengthAdjust="spacingAndGlyphs" >Translate.2</text><polygon points="18.0,329.3 16.0,330.5 16.5,332.9 14.2,332.3 13.0,334.3 11.8,332.3 9.5,332.9 10.0,330.5 8.0,329.3 10.0,328.1 9.5,325.8 11.8,326.4 13.0,324.3 14.2,326.4 16.5,325.8 16.0,328.1" fill="#e8d040"/><circle cx="13" cy="329.32" r="1.6" fill="#404040"/><circle cx="13" cy="329.32" r="1.5" fill="#e0a040"/><circle cx="18" cy="325.82" r="1.2" fill="#f0a060"/><circle cx="18" cy="332.82" r="1.2" fill="#40d0e0"/><text x="21.3" y="332.32" font-size="7.9" fill="#d4d4e2" textLength="34.7" lengthAdjust="spacingAndGlyphs" >Publication</text><rect x="11" y="343.59999999999997" width="7" height="1.1" fill="#d4d4e4"/><rect x="18.5" y="338.79999999999995" width="10.6" height="10.6" fill="#30c8d8"/><path d="M19.5,339.79999999999995 L26.5,339.79999999999995 L28.1,341.4 L28.1,348.4 L19.5,348.4 Z" fill="#fff8c0"/><path d="M21.5,342.09999999999997 Q24,340.09999999999997 26,342.09999999999997 Q26,344.59999999999997 23.5,344.59999999999997 M23.5,341.09999999999997 L23,348.09999999999997 M21.5,342.09999999999997 L21.5,346.09999999999997" fill="none" stroke="#000" stroke-width="1"/><text x="32" y="347.09999999999997" font-size="7.9" fill="#d4d4e2" textLength="26" lengthAdjust="spacingAndGlyphs" >CLASS A</text><rect x="11" y="358.38" width="7" height="1.1" fill="#d4d4e4"/><rect x="18.5" y="353.58" width="10.6" height="10.6" fill="#30c8d8"/><path d="M19.5,354.58 L26.5,354.58 L28.1,356.18 L28.1,363.18 L19.5,363.18 Z" fill="#fff8c0"/><path d="M21.5,356.88 Q24,354.88 26,356.88 Q26,359.38 23.5,359.38 M23.5,355.88 L23,362.88 M21.5,356.88 L21.5,360.88" fill="none" stroke="#000" stroke-width="1"/><text x="32" y="361.88" font-size="7.9" fill="#d4d4e2" textLength="47" lengthAdjust="spacingAndGlyphs" >TOOLING AXIS</text><rect x="11" y="373.15999999999997" width="7" height="1.1" fill="#d4d4e4"/><rect x="18.5" y="368.35999999999996" width="10.6" height="10.6" fill="#30c8d8"/><path d="M19.5,369.35999999999996 L26.5,369.35999999999996 L28.1,370.96 L28.1,377.96 L19.5,377.96 Z" fill="#fff8c0"/><path d="M21.5,371.65999999999997 Q24,369.65999999999997 26,371.65999999999997 Q26,374.15999999999997 23.5,374.15999999999997 M23.5,370.65999999999997 L23,377.65999999999997 M21.5,371.65999999999997 L21.5,375.65999999999997" fill="none" stroke="#000" stroke-width="1"/><text x="32" y="376.65999999999997" font-size="7.9" fill="#d4d4e2" textLength="57.5" lengthAdjust="spacingAndGlyphs" >CLASS B-SURFACE</text><rect x="11" y="387.94" width="7" height="1.1" fill="#d4d4e4"/><rect x="18.5" y="383.14" width="10.6" height="10.6" fill="#30c8d8"/><path d="M19.5,384.14 L26.5,384.14 L28.1,385.74 L28.1,392.74 L19.5,392.74 Z" fill="#fff8c0"/><path d="M21.5,386.44 Q24,384.44 26,386.44 Q26,388.94 23.5,388.94 M23.5,385.44 L23,392.44 M21.5,386.44 L21.5,390.44" fill="none" stroke="#000" stroke-width="1"/><text x="32" y="391.44" font-size="7.9" fill="#d4d4e2" textLength="58" lengthAdjust="spacingAndGlyphs" >CLASS C-SURFACE</text><rect x="11" y="402.71999999999997" width="7" height="1.1" fill="#d4d4e4"/><rect x="18.5" y="397.91999999999996" width="10.6" height="10.6" fill="#30c8d8"/><path d="M19.5,398.91999999999996 L26.5,398.91999999999996 L28.1,400.52 L28.1,407.52 L19.5,407.52 Z" fill="#fff8c0"/><path d="M21.5,401.21999999999997 Q24,399.21999999999997 26,401.21999999999997 Q26,403.71999999999997 23.5,403.71999999999997 M23.5,400.21999999999997 L23,407.21999999999997 M21.5,401.21999999999997 L21.5,405.21999999999997" fill="none" stroke="#000" stroke-width="1"/><text x="32" y="406.21999999999997" font-size="7.9" fill="#d4d4e2" textLength="59.75" lengthAdjust="spacingAndGlyphs" >PARTING SURFACE</text></g><path d="M743.7,42 L740,77" stroke="#d8c8f0" stroke-width="0.7"/><path d="M743.2,43.5 Q730,42 728.3,56 L741,61.3 Z" fill="#1e4a62" stroke="#d8c8f0" stroke-width="0.7"/><path d="M731.7,58.7 L741,62 L728.3,67.3 Z" fill="#080838" stroke="#d8c8f0" stroke-width="0.7"/><path d="M726.5,76.5 Q730,70.5 740,71.3 Q748,73 754.3,78.7 Q748,83 740,83.3 Q728,83 726.5,76.5 Z" fill="#1e4a62" stroke="#d8c8f0" stroke-width="0.7"/><circle cx="743.7" cy="41.3" r="1.4" fill="#f0e8ff"/><rect x="738.5" y="76" width="3" height="3" fill="#e00000"/><text x="737" y="42.5" font-size="6" fill="#d8c840">z</text><text x="721.5" y="57.5" font-size="6" fill="#d8c840">x</text><text x="721.5" y="68.5" font-size="6" fill="#d8c840">y</text><g stroke="#c8c8d8" stroke-width="0.7" fill="none"><path d="M769.4,395.7 L770.6,387.9 M769.4,395.7 L763.6,391 M769.4,395.7 L763.6,399"/></g><text x="770.5" y="388" font-size="4" fill="#c8c8d8">z</text><text x="762" y="392" font-size="4" fill="#c8c8d8">x</text><rect x="784" y="33" width="16" height="374.5" fill="#d4d4ea"/><rect x="784" y="33" width="2.6" height="374.5" fill="#f8f8ff"/><rect x="799" y="33" width="1" height="374.5" fill="#b8b8cc"/><rect x="787.5" y="36" width="10" height="0.7" fill="#a8a8c0"/><rect x="787.5" y="36.7" width="10" height="0.5" fill="#fff"/><circle cx="792.5" cy="44.4" r="3.3" fill="#909890" stroke="#505850" stroke-width="0.6"/><circle cx="792.5" cy="44.4" r="1.5" fill="#c0c8c0" stroke="none" stroke-width="0.5"/><path d="M789,47 L791,48" stroke="#40c0a0" stroke-width="1"/><rect x="787.5" y="54" width="10" height="0.7" fill="#a8a8c0"/><rect x="787.5" y="54.7" width="10" height="0.5" fill="#fff"/><circle cx="792.5" cy="64.4" r="3.5" fill="#e01010" stroke="#fff" stroke-width="0.5"/><path d="M791,63 L794,66 M794,63 L791,66" stroke="#fff" stroke-width="0.8"/><rect x="787.5" y="73" width="10" height="0.7" fill="#a8a8c0"/><rect x="787.5" y="73.7" width="10" height="0.5" fill="#fff"/><rect x="788.5" y="79" width="7.5" height="7.5" fill="#e8f4ff" stroke="#3060a0" stroke-width="0.6"/><path d="M789.5,85.5 L795,80" stroke="#208060" stroke-width="1.2"/><path d="M796,87 l1.5,1.5" stroke="#000" stroke-width="0.8"/><rect x="787.5" y="92" width="10" height="0.7" fill="#a8a8c0"/><rect x="787.5" y="92.7" width="10" height="0.5" fill="#fff"/><rect x="789" y="98" width="7" height="8" fill="#d0d0d8" stroke="#b8b8c4" stroke-width="0.5"/><rect x="789" y="110.5" width="7.5" height="7.5" fill="#40c0e0" stroke="#3050a0" stroke-width="0.6"/><path d="M789,114.2 H796.5 M792.7,110.5 V118" stroke="#b0f0ff" stroke-width="0.6"/><rect x="787.5" y="123.6" width="10" height="0.7" fill="#a8a8c0"/><rect x="787.5" y="124.3" width="10" height="0.5" fill="#fff"/><circle cx="792.5" cy="131.8" r="3.8" fill="#e0d020" stroke="#606010" stroke-width="0.5"/><circle cx="792" cy="132.3" r="2" fill="#404020" stroke="none" stroke-width="0.5"/><path d="M790,133.8 L795,129.8" stroke="#20a040" stroke-width="1.2"/><circle cx="792.5" cy="144" r="3.8" fill="#e0d020" stroke="#606010" stroke-width="0.5"/><circle cx="792" cy="144.5" r="2" fill="#404020" stroke="none" stroke-width="0.5"/><path d="M790,146 L795,142" stroke="#e02020" stroke-width="1.2"/><circle cx="792.5" cy="155" r="3.8" fill="#e0d020" stroke="#606010" stroke-width="0.5"/><circle cx="792" cy="155.5" r="2" fill="#404020" stroke="none" stroke-width="0.5"/><path d="M790,157 L795,153" stroke="#2040c0" stroke-width="1.2"/><circle cx="792.5" cy="166.7" r="3.8" fill="#e0d020" stroke="#606010" stroke-width="0.5"/><circle cx="792" cy="167.2" r="2" fill="#404020" stroke="none" stroke-width="0.5"/><path d="M790,168.7 L795,164.7" stroke="#e04040" stroke-width="1.2"/><rect x="787.5" y="233.5" width="10" height="0.7" fill="#a8a8c0"/><rect x="787.5" y="234.2" width="10" height="0.5" fill="#fff"/><path d="M792.5,238.5 L797,240.5 L792.5,242.5 L788,240.5 Z" fill="#40b0b0" stroke="#303040" stroke-width="0.4"/><path d="M788,240.5 L792.5,242.5 L792.5,247 L788,245 Z" fill="#f0e070" stroke="#303040" stroke-width="0.4"/><path d="M797,240.5 L792.5,242.5 L792.5,247 L797,245 Z" fill="#e8f0f0" stroke="#303040" stroke-width="0.4"/><path d="M796,247.5 h2.4 l-1.2,1.2 Z" fill="#000"/><rect x="787.5" y="264.5" width="10" height="0.7" fill="#a8a8c0"/><rect x="787.5" y="265.2" width="10" height="0.5" fill="#fff"/><path d="M789,269 L789,277 L791,275.5 L793,279 L794.5,278 L792.5,274.5 L795,274 Z" fill="#f0f060" stroke="#505000" stroke-width="0.5"/><path d="M796,277 l1.5,1.5" stroke="#000" stroke-width="0.8"/><rect x="769" y="111" width="14.5" height="61" fill="#f4f4fc" stroke="#c0c0d4" stroke-width="0.6"/><rect x="775" y="112" width="8" height="9" fill="#d84848"/><path d="M777.3,115 L780.7,118.4 M780.7,115 L777.3,118.4" stroke="#fff" stroke-width="0.7"/><text x="769.8" y="119" font-size="6" fill="#606060">S</text><rect x="769" y="123" width="14.5" height="0.6" fill="#c8c8d8"/><path d="M775.5,125.5 L780,127.5 L775.5,129.5 L771,127.5 Z" fill="#30a0b0" stroke="#303040" stroke-width="0.4"/><path d="M771,127.5 L775.5,129.5 L775.5,134 L771,132 Z" fill="#f0e070" stroke="#303040" stroke-width="0.4"/><path d="M780,127.5 L775.5,129.5 L775.5,134 L780,132 Z" fill="#e0f0f0" stroke="#303040" stroke-width="0.4"/><path d="M771.5,140 L775,137 L782,138.5 L782,144 L775,146 L771.5,144 Z" fill="#40c0e0" stroke="#304060" stroke-width="0.4"/><path d="M771.5,141 L775,143 L782,141" stroke="#f0e080" stroke-width="1.2" fill="none"/><path d="M771.5,157 L779,151 Q782,150 782,153 L775,159 Q771,160 771.5,157 Z" fill="#3080f0" stroke="#203060" stroke-width="0.4"/><path d="M773,157 L780,152" stroke="#c0e8ff" stroke-width="0.8"/><rect x="772" y="162" width="9.5" height="8" fill="#208890" stroke="#103040" stroke-width="0.4"/><rect x="775.5" y="163.5" width="3" height="6" fill="#f0e060"/><rect x="636.5" y="233.3" width="99" height="44" fill="#20203a" opacity="0.5"/><rect x="635.8" y="232.6" width="99" height="44" fill="#fbe4bc" stroke="#a0a0b0" stroke-width="0.5"/><rect x="636" y="232.8" width="98.6" height="12.2" fill="#ffffff"/><text x="639.4" y="240.6" font-size="6" fill="#909098" textLength="51" lengthAdjust="spacingAndGlyphs">CloseSurface Definition</text><text x="704.8" y="240.8" font-size="6.2" fill="#909098">?</text><path d="M722.7,236.5 L727.3,241.1 M727.3,236.5 L722.7,241.1" stroke="#808088" stroke-width="0.6"/><text x="641.7" y="256.8" font-size="6.4" fill="#202020" textLength="33.7" lengthAdjust="spacingAndGlyphs">Object to close:</text><rect x="678" y="250.9" width="42.8" height="7.1" fill="#2a7ad8"/><text x="679" y="256.6" font-size="6" fill="#ffffff" textLength="41" lengthAdjust="spacingAndGlyphs">CAVITY SURFACE B</text><rect x="667" y="263.5" width="29.700000000000045" height="9.5" fill="url(#btn)" stroke="#9a9ab0" stroke-width="0.5"/><circle cx="676.8" cy="268.2" r="2.4" fill="#20b020" stroke="#303030" stroke-width="0.3"/><circle cx="676.2" cy="267.5" r="0.8" fill="#ffffff" stroke="none" stroke-width="0.5"/><text x="682.3" y="270.4" font-size="5.8" fill="#202020" textLength="8.5" lengthAdjust="spacingAndGlyphs">OK</text><rect x="700.8" y="263.5" width="29.600000000000023" height="9.5" fill="url(#btn)" stroke="#9a9ab0" stroke-width="0.5"/><circle cx="707.0" cy="268.2" r="2.4" fill="#e02020" stroke="#303030" stroke-width="0.3"/><circle cx="706.4" cy="267.5" r="0.8" fill="#ffffff" stroke="none" stroke-width="0.5"/><text x="711" y="270.4" font-size="5.8" fill="#202020" textLength="15" lengthAdjust="spacingAndGlyphs">Cancel</text><path d="M636.2,276.4 L636.2,266 Q648,262 655,276.4 Z" fill="#fcd8a0" opacity="0.8"/><path d="M636.2,276.4 L636.2,272 Q642,268.5 650,276.4 Z" fill="#6a98c0"/><rect x="0" y="407.5" width="800" height="16" fill="url(#tb)"/><rect x="2.5" y="410" width="1" height="9" fill="#a8a8c0"/><path d="M9.5,412.5 H14.5 L16.5,414.5 V421 H9.5 Z" fill="#fffce0" stroke="#808070" stroke-width="0.5"/><path d="M19.5,415 H24 L25,416 H28 L26.5,420.5 H19.5 Z" fill="#e8b020" stroke="#806010" stroke-width="0.4"/><path d="M23,414 L28,412.5" stroke="#40a040" stroke-width="0.8"/><rect x="31.5" y="412.5" width="8" height="8.5" fill="#303030"/><rect x="33" y="413" width="5" height="3.5" fill="#f0e060"/><rect x="33.5" y="418" width="3" height="2.5" fill="#000"/><path d="M42.7,417 L45,414 H51 L51.7,417 V420 H42.7 Z" fill="#a8a880" stroke="#505040" stroke-width="0.4"/><rect x="45" y="412.5" width="5" height="3" fill="#60c0f0"/><rect x="44" y="418" width="6" height="1.2" fill="#40a040"/><path d="M56,412.5 L61.5,421 M61.5,412.5 L56,421" stroke="#b8b8c0" stroke-width="0.9"/><circle cx="56.5" cy="419.5" r="1.4" fill="none" stroke="#b0b0b8" stroke-width="0.6"/><circle cx="61" cy="419.5" r="1.4" fill="none" stroke="#b0b0b8" stroke-width="0.6"/><rect x="66.5" y="412.5" width="5" height="6" fill="#e8e8ec" stroke="#c0c0c8" stroke-width="0.5"/><rect x="69.5" y="415" width="5" height="6" fill="#e8e8ec" stroke="#c0c0c8" stroke-width="0.5"/><rect x="78.5" y="414" width="6" height="7" fill="#c0a060" stroke="#504020" stroke-width="0.4"/><rect x="80" y="412.5" width="3" height="2" fill="#606060"/><rect x="81" y="416.5" width="5" height="4.5" fill="#f0f0f8" stroke="#3060c0" stroke-width="0.4"/><path d="M90,416 Q93,412 97,414.5 Q99.5,417 97,420" fill="none" stroke="#10a070" stroke-width="1.5"/><path d="M89.5,413 L90,417.5 L94,416.5 Z" fill="#10a070"/><path d="M97.5,421 h2.4 l-1.2,1.2 Z" fill="#000"/><path d="M110,416 Q107,412 103,414.5 Q100.5,417 103,420" fill="none" stroke="#c8c8d0" stroke-width="1.3"/><path d="M108.5,421 h2.4 l-1.2,1.2 Z" fill="#000"/><path d="M113.5,414 L117,413 L117,421 L113.5,419 Z" fill="#f0e060" stroke="#3060a0" stroke-width="0.4"/><text x="117" y="420.5" font-size="8" font-weight="bold" fill="#2040c0">?</text><rect x="128" y="410.5" width="0.8" height="10.5" fill="#a8a8c0"/><rect x="128.8" y="410.5" width="0.6" height="10.5" fill="#ffffff"/><circle cx="135.5" cy="417" r="3" fill="#404848" stroke="#202020" stroke-width="0.3"/><circle cx="139" cy="416" r="2.6" fill="#687070" stroke="#202020" stroke-width="0.3"/><circle cx="135.5" cy="417" r="1.2" fill="#b0c0c0" stroke="none" stroke-width="0.5"/><path d="M132.5,420.5 L136,421" stroke="#40c0a0" stroke-width="1"/><path d="M145,421 L149.5,414 L154,421 Z" fill="#30b0a0"/><circle cx="149.5" cy="415.5" r="2.6" fill="#303838" stroke="none" stroke-width="0.5"/><circle cx="149.5" cy="415.5" r="1" fill="#a0b0b0" stroke="none" stroke-width="0.5"/><path d="M158,421 L162,412 L167.7,418 Z" fill="#f09030"/><circle cx="161" cy="416" r="2.2" fill="#505858" stroke="#fff" stroke-width="0.4"/><circle cx="165" cy="415" r="2.2" fill="#707878" stroke="#fff" stroke-width="0.4"/><path d="M170,421 L174,413 L179,419 Z" fill="#40d0b0"/><circle cx="175" cy="416" r="3" fill="#505858" stroke="#fff" stroke-width="0.4"/><circle cx="175" cy="416" r="1.2" fill="#c0c8c8" stroke="none" stroke-width="0.5"/><rect x="183.5" y="412.5" width="8.3" height="8.5" fill="#203880"/><path d="M185,414.5 L190,419.5" stroke="#f0d020" stroke-width="1.5"/><path d="M184.5,416 L187,413.5" stroke="#e0e0f0" stroke-width="1.2"/><rect x="199" y="410.5" width="0.8" height="10.5" fill="#a8a8c0"/><rect x="199.8" y="410.5" width="0.6" height="10.5" fill="#ffffff"/><text x="203.5" y="419.8" font-size="8" font-family="Liberation Serif" font-style="italic" fill="#101010">f</text><text x="206.5" y="419.8" font-size="6" fill="#101010" textLength="6" lengthAdjust="spacingAndGlyphs">oo</text><ellipse cx="219.5" cy="416" rx="4.3" ry="3.2" fill="#f8f8f8" stroke="#303030" stroke-width="0.6"/><path d="M216.5,418.5 L216,421.5 L219,419" fill="#f8f8f8" stroke="#303030" stroke-width="0.5"/><path d="M217.5,416 h4" stroke="#606060" stroke-width="0.6"/><ellipse cx="229.5" cy="415.5" rx="1.8" ry="2.5" fill="#d0d0d8"/><rect x="228.3" y="417.5" width="2.4" height="3" fill="#c8c8d0"/><rect x="236" y="413" width="8.5" height="7" fill="#303848"/><path d="M236,415 H244.5 M236,417 H244.5 M236,419 H244.5 M239,413 V420 M242,413 V420" stroke="#a0a8c0" stroke-width="0.4"/><rect x="236" y="413" width="8.5" height="1.5" fill="#3060c0"/><path d="M242.5,421.5 h2.4 l-1.2,1.2 Z" fill="#000"/><circle cx="249" cy="417" r="1.5" fill="#f0a040" stroke="none" stroke-width="0.5"/><path d="M250,416.5 L254,413.5 M250,417 L254,417 M250,417.5 L254,420.5" stroke="#3080f0" stroke-width="0.6"/><circle cx="254.5" cy="413.5" r="1.3" fill="#40a0f0" stroke="none" stroke-width="0.5"/><circle cx="254.5" cy="417" r="1.3" fill="#40a0f0" stroke="none" stroke-width="0.5"/><circle cx="254.5" cy="420.5" r="1.3" fill="#40a0f0" stroke="none" stroke-width="0.5"/><path d="M260,420 Q260,413 264,412.5 Q268,413 268,420 Z" fill="#606068" stroke="#303030" stroke-width="0.4"/><path d="M262,414 V419 M264,413.5 V419 M266,414 V419" stroke="#a0a0a8" stroke-width="0.5"/><path d="M265.5,421.5 h2.4 l-1.2,1.2 Z" fill="#000"/><rect x="271" y="412.5" width="3" height="8.5" fill="#30a0b0"/><rect x="271" y="414.5" width="3" height="1.5" fill="#f0e060"/><rect x="271" y="418" width="3" height="1.5" fill="#f0e060"/><path d="M275,416.5 H279 M277,414 V419" stroke="#b0b0c0" stroke-width="0.6"/><rect x="286" y="410.5" width="0.8" height="10.5" fill="#a8a8c0"/><rect x="286.8" y="410.5" width="0.6" height="10.5" fill="#ffffff"/><path d="M290,414 L293,416.5 L298,413 L296,418 L298.5,420.5 L294,419 L291,421 Z" fill="#30a0d0" stroke="#205080" stroke-width="0.3"/><rect x="301.7" y="412.5" width="8.3" height="8.5" fill="#f8f080" stroke="#60c0f0" stroke-width="0.6"/><path d="M303,414 L308.5,419.5 M308.5,414 L303,419.5" stroke="#404020" stroke-width="1.1"/><path d="M317.5,412.5 V421 M313,416.7 H322" stroke="#2040c0" stroke-width="1.2"/><path d="M317.5,412 l-1.6,2 h3.2 Z M317.5,421.5 l-1.6,-2 h3.2 Z M312.5,416.7 l2,-1.6 v3.2 Z M322.5,416.7 l-2,-1.6 v3.2 Z" fill="#2040c0"/><ellipse cx="329.5" cy="416.7" rx="4.3" ry="2.6" fill="none" stroke="#e06030" stroke-width="0.9"/><circle cx="330.5" cy="417.5" r="2.3" fill="#3090e0" stroke="none" stroke-width="0.5"/><path d="M326,416 Q329,413 333,416" fill="none" stroke="#f0e040" stroke-width="0.7"/><circle cx="340.3" cy="415.8" r="2.9" fill="#f8f8ff" stroke="#202020" stroke-width="0.9"/><circle cx="340.3" cy="415.8" r="0.9" fill="#202020" stroke="none" stroke-width="0.5"/><path d="M342.5,418 L345.7,421" stroke="#2060c0" stroke-width="1.3"/><circle cx="352" cy="415.8" r="2.9" fill="#f8f8ff" stroke="#202020" stroke-width="0.9"/><circle cx="352" cy="415.8" r="0.9" fill="#404040" stroke="none" stroke-width="0.5"/><path d="M354.2,418 L357.4,421" stroke="#2060c0" stroke-width="1.3"/><path d="M360.7,420.5 L363.5,417.5 H369 L366,420.5 Z" fill="#30a0d0" stroke="#205060" stroke-width="0.3"/><path d="M364.8,418 V413 M363.5,414.5 L364.8,413 L366,414.5" fill="none" stroke="#f09030" stroke-width="0.8"/><rect x="372" y="412.5" width="8" height="8.5" fill="#2060e0"/><rect x="372.8" y="413.3" width="3" height="3.2" fill="#40c8ff"/><rect x="376.3" y="413.3" width="3" height="3.2" fill="#40c8ff"/><rect x="372.8" y="417" width="3" height="3.2" fill="#40c8ff"/><rect x="376.3" y="417" width="3" height="3.2" fill="#40c8ff"/><path d="M383.5,414 L386,412.5 H392 V419 L389.5,421 H383.5 Z" fill="#40b8f0" stroke="#2050c0" stroke-width="0.5"/><path d="M383.5,414 H389.5 V421 M389.5,414 L392,412.5" fill="none" stroke="#2050c0" stroke-width="0.5"/><path d="M389.5,421.5 h2.4 l-1.2,1.2 Z" fill="#000"/><rect x="396.5" y="412.5" width="7" height="8.5" rx="1.5" fill="#e0e0f0" stroke="#404060" stroke-width="0.5"/><text x="398" y="419.5" font-size="6.5" fill="#202040">?</text><path d="M401.5,421.5 h2.4 l-1.2,1.2 Z" fill="#000"/><rect x="407.5" y="412.5" width="8" height="8.5" fill="#40a8c8" stroke="#506080" stroke-width="0.4"/><path d="M408.5,420 L414.5,413.5" stroke="#f0e060" stroke-width="1.4"/><rect x="419" y="412.5" width="7.7" height="8.5" fill="#40b8e0" stroke="#506080" stroke-width="0.4"/><path d="M420,419.5 L425,416.5 L421.5,415" stroke="#f0e060" stroke-width="1.1" fill="none"/><rect x="437.3" y="410.5" width="0.8" height="10.5" fill="#a8a8c0"/><rect x="438.1" y="410.5" width="0.6" height="10.5" fill="#ffffff"/><rect x="441.5" y="414" width="9.5" height="6" rx="1" fill="#303038"/><circle cx="446.2" cy="417" r="1.8" fill="#c0c0c8"/><rect x="443" y="413" width="3" height="1.5" fill="#303038"/><rect x="456.8" y="410.5" width="0.8" height="10.5" fill="#a8a8c0"/><rect x="457.6" y="410.5" width="0.6" height="10.5" fill="#ffffff"/><circle cx="466" cy="416.8" r="4" fill="#d8d8e0" stroke="#b0b0b8" stroke-width="0.6"/><path d="M463.5,418 Q464,414.5 467,415 Q469,416 467.5,418" fill="none" stroke="#a8a8b0" stroke-width="0.8"/><circle cx="478" cy="416.5" r="4.4" fill="#2070c0" stroke="none" stroke-width="0.5"/><circle cx="478" cy="416.5" r="3" fill="#f0d090" stroke="none" stroke-width="0.5"/><path d="M477,420 L477,416 Q478,414.5 479,416 L480,418 L481,421 Z" fill="#f8f8f8" stroke="#505050" stroke-width="0.3"/><path d="M489,413 V419 L494,420.5 M489,419 L486,421" fill="none" stroke="#303030" stroke-width="0.7"/><circle cx="489" cy="419" r="0.7" fill="#e06020"/><g fill="#203050"><rect x="497" y="413" width="3" height="1.2"/><rect x="497" y="415.5" width="3" height="1.2"/><rect x="497" y="418" width="3" height="1.2"/></g><g fill="#2060e0"><rect x="501.5" y="413" width="3" height="1.2"/><rect x="501.5" y="417" width="3" height="3.5"/></g><rect x="510" y="412.5" width="7.5" height="8.5" rx="2" fill="#30c0a0" stroke="#105050" stroke-width="0.4"/><path d="M512,412.5 V421 M515.5,412.5 V421" stroke="#2060c0" stroke-width="0.7"/><path d="M516,421.5 h2.4 l-1.2,1.2 Z" fill="#000"/><path d="M520.5,413 L525,417 M525,413 L520.5,417" stroke="#e02020" stroke-width="1.2"/><path d="M522.5,417 L522.5,421 M523,419 H529" stroke="#2040c0" stroke-width="0.9"/><g fill="#3060e0"><rect x="534" y="412.5" width="5" height="1.4"/><rect x="534" y="415.2" width="5" height="1.4"/><rect x="534" y="418" width="5" height="1.4"/></g><path d="M533.5,412.5 V420.5" stroke="#a0a0c0" stroke-width="0.4"/><path d="M538.5,421.5 h2.4 l-1.2,1.2 Z" fill="#000"/><path d="M543.5,418 L548,413 L552,415 L547.5,420.5 Z" fill="#c8e0ff" stroke="#2050d0" stroke-width="0.7"/><path d="M543.5,418 L543.5,419.5 L547.5,421.5 L552,416" fill="none" stroke="#2050d0" stroke-width="0.7"/><rect x="553.7" y="411.5" width="68.8" height="9.1" fill="#ffffff" stroke="#c8c8d8" stroke-width="0.5"/><text x="555.5" y="418.7" font-size="6" fill="#505060" textLength="32" lengthAdjust="spacingAndGlyphs">CAVITY BLOCK</text><path d="M615.5,415.5 L617.5,417.3 L619.5,415.5" fill="none" stroke="#606070" stroke-width="0.6"/><rect x="647" y="410.5" width="0.8" height="10.5" fill="#a8a8c0"/><rect x="647.8" y="410.5" width="0.6" height="10.5" fill="#ffffff"/><path d="M652,412.5 V420.5 H660.5" fill="none" stroke="#404050" stroke-width="0.7"/><rect x="653" y="416" width="5" height="1.4" fill="#e04040"/><rect x="653" y="418.5" width="7" height="1.2" fill="#e04040"/><rect x="654" y="413.5" width="2.5" height="2" fill="#a0a0a0"/><rect x="666" y="410.5" width="0.8" height="10.5" fill="#a8a8c0"/><rect x="666.8" y="410.5" width="0.6" height="10.5" fill="#ffffff"/><path d="M671,417 Q671,412.5 675.5,412.5 Q679.5,413 679.5,416" fill="none" stroke="#2080e0" stroke-width="1.4"/><rect x="671" y="417" width="8.5" height="4" rx="1" fill="#606068"/><rect x="672" y="417.8" width="6.5" height="1.5" fill="#e0e0e8"/><rect x="686.4" y="410.5" width="0.8" height="10.5" fill="#a8a8c0"/><rect x="687.1999999999999" y="410.5" width="0.6" height="10.5" fill="#ffffff"/><rect x="690.5" y="414" width="9" height="2.4" fill="#2060e0"/><path d="M690.5,415.2 h9 M692,413.5 l-1.5,1.7 l1.5,1.7 M698,413.5 l1.5,1.7 l-1.5,1.7" stroke="#2060e0" stroke-width="0.6" fill="none"/><rect x="690.5" y="418" width="9" height="2.5" fill="#f08080"/><rect x="703.5" y="413" width="6.5" height="8" fill="#303038"/><rect x="704.5" y="414.5" width="3" height="4.5" fill="#40d0d0"/><rect x="715" y="413" width="4.8" height="8" rx="2" fill="#c8b040" stroke="#404020" stroke-width="0.5"/><rect x="716" y="415" width="2.8" height="1.2" fill="#303020"/><rect x="729" y="410.5" width="0.8" height="10.5" fill="#a8a8c0"/><rect x="729.8" y="410.5" width="0.6" height="10.5" fill="#ffffff"/><path d="M733,418 L737,413.5 L742,414.5 L741.5,419 L736.5,421 Z" fill="#f0a030" stroke="#805010" stroke-width="0.4"/><path d="M735,419 L741,413" stroke="#e04020" stroke-width="1"/><rect x="749.5" y="410.5" width="0.8" height="10.5" fill="#a8a8c0"/><rect x="750.3" y="410.5" width="0.6" height="10.5" fill="#ffffff"/><path d="M753.5,418 L756,414 L761,415 L760,420 Z" fill="#e8e040" stroke="#404020" stroke-width="0.5"/><path d="M755,416 L761.5,412.5" stroke="#2060c0" stroke-width="1"/><path d="M760,421.5 h2.4 l-1.2,1.2 Z" fill="#000"/><path d="M764.5,414 L768,412.5 L773,414.5 L772,419 L767,420.5 Z" fill="#f0e040" stroke="#404020" stroke-width="0.5"/><path d="M765,416 L771,414" stroke="#30a0e0" stroke-width="1.2"/><path d="M771.5,421.5 h2.4 l-1.2,1.2 Z" fill="#000"/><text x="781.5" y="416.5" font-size="7" font-style="italic" font-weight="bold" fill="#e02020">3</text><text x="784.5" y="417.5" font-size="6" font-style="italic" font-weight="bold" fill="#2040c0">S</text><text x="781" y="421.8" font-size="3.8" font-style="italic" font-weight="bold" fill="#2040c0" textLength="16" lengthAdjust="spacingAndGlyphs">CATIA</text><rect x="0" y="423.5" width="800" height="9" fill="#d6d6ee"/><text x="1" y="430.8" font-size="6.4" fill="#404050" text-anchor="start" textLength="57" lengthAdjust="spacingAndGlyphs" >Select the surface to close</text><rect x="646.4" y="424" width="125" height="8.5" fill="#ffffff"/><rect x="771.5" y="424" width="14" height="8.5" fill="#c8c8e0" stroke="#fff" stroke-width="0.5"/><rect x="786" y="424" width="14" height="8.5" fill="#c8c8e0" stroke="#fff" stroke-width="0.5"/><rect x="776" y="426" width="5" height="4" fill="none" stroke="#808090" stroke-width="0.5"/><circle cx="793" cy="428.2" r="2.2" fill="none" stroke="#808090" stroke-width="0.5"/><rect x="0" y="432.5" width="800" height="17.5" fill="#3a1f22"/><rect x="20" y="432.3" width="143" height="17.7" fill="#f2f2f2"/><rect x="20" y="449" width="143" height="1" fill="#d4d4d4"/><g fill="#ffffff"><rect x="6.8" y="437.5" width="3.2" height="3.2"/><rect x="10.5" y="437.5" width="3.2" height="3.2"/><rect x="6.8" y="441.2" width="3.2" height="3.2"/><rect x="10.5" y="441.2" width="3.2" height="3.2"/></g><circle cx="30" cy="440" r="2.3" fill="none" stroke="#303030" stroke-width="0.7"/><path d="M28.3,441.7 L25.8,444.2" stroke="#303030" stroke-width="0.8"/><text x="37" y="443.8" font-size="7.6" fill="#404040" textLength="53" lengthAdjust="spacingAndGlyphs">Type here to search</text><circle cx="173.3" cy="441.2" r="2.9" fill="none" stroke="#ffffff" stroke-width="0.9"/><g fill="none" stroke="#e8e8e8" stroke-width="0.7"><rect x="190.5" y="438.8" width="4.2" height="5"/><path d="M189,437.5 H196 M189,445 H196 M196.5,439 V444"/></g><circle cx="214" cy="441" r="4.5" fill="#1090d8"/><path d="M211,442 Q212,437.5 216,438.5 Q218.5,440 217,442 L212.5,442 Q214,445 218,444 Q215,447 211.5,444.5 Z" fill="#60e080" opacity="0.8"/><circle cx="214.5" cy="441.5" r="1.6" fill="#0a4a8a"/><rect x="229.5" y="437.5" width="9" height="7.5" fill="#f0c030"/><rect x="229.5" y="437.5" width="9" height="2" fill="#e0a020"/><rect x="230.5" y="440.5" width="7" height="1" fill="#3080d0"/><rect x="226" y="448.8" width="16" height="1.2" fill="#8ab8e0"/><rect x="250.5" y="438.5" width="9" height="7.5" fill="#f4f4f4"/><path d="M253,438.5 Q255,435.5 257,438.5" fill="none" stroke="#f4f4f4" stroke-width="0.8"/><g><rect x="253" y="440.3" width="1.9" height="1.9" fill="#f25022"/><rect x="255.2" y="440.3" width="1.9" height="1.9" fill="#7fba00"/><rect x="253" y="442.5" width="1.9" height="1.9" fill="#00a4ef"/><rect x="255.2" y="442.5" width="1.9" height="1.9" fill="#ffb900"/></g><rect x="271.5" y="438" width="9.5" height="7" fill="#1a8ad8"/><path d="M271.5,438 L276.2,441.8 L281,438" fill="none" stroke="#c8e8ff" stroke-width="0.8"/><rect x="268.5" y="448.8" width="16" height="1.2" fill="#8ab8e0"/><circle cx="296" cy="441" r="4.6" fill="#db3a2c"/><path d="M296,441 L291.5,442.2 A4.6,4.6 0 0 0 298.5,445 Z" fill="#1fa048"/><path d="M296,441 L300.6,441 A4.6,4.6 0 0 1 298.5,445 Z" fill="#fcc419"/><circle cx="296" cy="441" r="2" fill="#fff"/><circle cx="296" cy="441" r="1.4" fill="#3a7ae0"/><rect x="288" y="448.8" width="16" height="1.2" fill="#8ab8e0"/><rect x="311.5" y="436.5" width="10" height="9.5" fill="#e8e8f0"/><circle cx="314" cy="439" r="1.5" fill="#e02020"/><circle cx="318.5" cy="439" r="1.5" fill="#3060d0"/><circle cx="314" cy="443.5" r="1.5" fill="#20a040"/><circle cx="318.5" cy="443.5" r="1.5" fill="#f0a020"/><rect x="308.5" y="448.8" width="16" height="1.2" fill="#8ab8e0"/><rect x="326.5" y="432.3" width="20.5" height="17.7" fill="#5a4446"/><rect x="331.5" y="436.5" width="10" height="9.5" fill="#101018"/><path d="M333,438 L340,445 L341.5,443.5 L334.5,436.8 Z" fill="#3a90e0"/><path d="M335.5,437 L341.3,442.5" stroke="#f09020" stroke-width="1"/><rect x="326.5" y="448.8" width="20.5" height="1.2" fill="#8ab8e0"/><path d="M354.5,441.5 L357.5,440 L357,442 Z" fill="#2080e0"/><rect x="349" y="448.8" width="16" height="1.2" fill="#8ab8e0"/><path d="M688.5,442.5 L691,440 L693.5,442.5" fill="none" stroke="#e0e0e0" stroke-width="0.7"/><rect x="699.5" y="438.5" width="3.5" height="5" fill="none" stroke="#d0d0d0" stroke-width="0.6"/><path d="M698.8,440.5 H703.7 M701.2,444 V445.5" stroke="#d0d0d0" stroke-width="0.6"/><rect x="707" y="437.8" width="6.5" height="6.5" fill="none" stroke="#d0d0d0" stroke-width="0.6"/><rect x="708.5" y="439.3" width="3.5" height="3" fill="#d0d0d0" opacity="0.5"/><circle cx="713" cy="444.2" r="1.2" fill="#f8a000"/><rect x="717.5" y="438.3" width="7" height="5" fill="none" stroke="#d8d8d8" stroke-width="0.6"/><path d="M719,445 H723 M716.5,439 V444" stroke="#d8d8d8" stroke-width="0.6"/><path d="M727.5,440 H729 L731,438.3 V444.7 L729,443 H727.5 Z" fill="none" stroke="#d8d8d8" stroke-width="0.6"/><path d="M732.5,439.5 Q733.5,441.5 732.5,443.5" fill="none" stroke="#b8b8b8" stroke-width="0.5"/><text x="743.7" y="440.3" font-size="5.4" fill="#e8e8e8" text-anchor="middle" textLength="10" lengthAdjust="spacingAndGlyphs">ENG</text><text x="744" y="447.2" font-size="5.4" fill="#e8e8e8" text-anchor="middle">IN</text><text x="765" y="440.3" font-size="5.4" fill="#e8e8e8" text-anchor="middle" textLength="18" lengthAdjust="spacingAndGlyphs">5:14 PM</text><text x="765.5" y="447.2" font-size="5.4" fill="#e8e8e8" text-anchor="middle" textLength="19" lengthAdjust="spacingAndGlyphs">4/7/2021</text><path d="M784,437.5 H791 V443 H787 L785,445 V443 H784 Z" fill="none" stroke="#e8e8e8" stroke-width="0.7"/><circle cx="790" cy="444" r="2.4" fill="#202020" stroke="#e8e8e8" stroke-width="0.5"/><text x="790" y="445.8" font-size="4" fill="#fff" text-anchor="middle">1</text></svg></body></html>
